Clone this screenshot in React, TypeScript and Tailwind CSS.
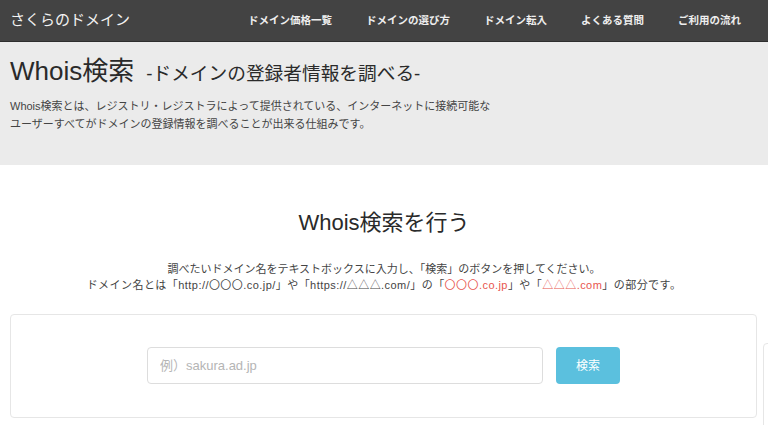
const nav = ['ドメイン価格一覧', 'ドメインの選び方', 'ドメイン転入', 'よくある質問', 'ご利用の流れ'];

const font = { fontFamily: '"Liberation Sans", "Noto Sans CJK JP", sans-serif' };

export default function App() {
  return (
    <div className="relative min-h-[425px] overflow-hidden bg-white text-[#333]" style={font}>
      {/* header */}
      <header className="flex h-[42px] items-center justify-between border-b border-[#2e2e2e] bg-[#434343] pl-[10px] pr-[27px]">
        <div className="text-[15px] text-[#f2f2f2]">さくらのドメイン</div>
        <nav className="flex gap-[34px]">
          {nav.map((n) => (
            <a key={n} className="text-[10.5px] font-bold text-[#eeeeee]">
              {n}
            </a>
          ))}
        </nav>
      </header>

      {/* hero band */}
      <section className="h-[123px] bg-[#ebebeb] px-[10px] pt-[10px]">
        <h1 className="flex items-baseline gap-[12px] text-[#2a2a2a]">
          <span className="text-[26px]">Whois検索</span>
          <span className="text-[18.7px]">-ドメインの登録者情報を調べる-</span>
        </h1>
        <p className="mt-[6px] text-[11px] leading-[18px] text-[#444]">
          Whois検索とは、レジストリ・レジストラによって提供されている、インターネットに接続可能な
          <br />
          ユーザーすべてがドメインの登録情報を調べることが出来る仕組みです。
        </p>
      </section>

      {/* main */}
      <main className="px-[10px] pt-[41px]">
        <h2 className="text-center text-[22px] text-[#2a2a2a]">Whois検索を行う</h2>
        <div className="mt-[22px] text-center text-[11px] leading-[16px] text-[#444]">
          <p>調べたいドメイン名をテキストボックスに入力し、「検索」のボタンを押してください。</p>
          <p className="tracking-[0.45px]">
            ドメイン名とは「http://〇〇〇.co.jp/」や「https://△△△.com/」の「
            <span className="text-[#e8564e]">〇〇〇.co.jp</span>」や「
            <span className="text-[#e8564e]">△△△.com</span>」の部分です。
          </p>
        </div>

        <div className="mt-[21px] flex w-[747px] justify-center gap-[13px] rounded-[4px] border border-[#e6e6e6] pb-[33px] pt-[32px]">
          <input
            className="h-[37px] w-[396px] rounded-[4px] border border-[#dddddd] px-[12px] text-[13px] outline-none placeholder:text-[#b5b5b5]"
            placeholder="例）sakura.ad.jp"
          />
          <button className="h-[37px] w-[64px] rounded-[4px] bg-[#5bc0de] text-[12px] text-white">検索</button>
        </div>
      </main>

      {/* side tab peeking at right edge */}
      <div className="absolute right-[-40px] top-[343px] h-[90px] w-[45px] rounded-[4px] border border-[#e6e6e6] bg-white" />
    </div>
  );
}
